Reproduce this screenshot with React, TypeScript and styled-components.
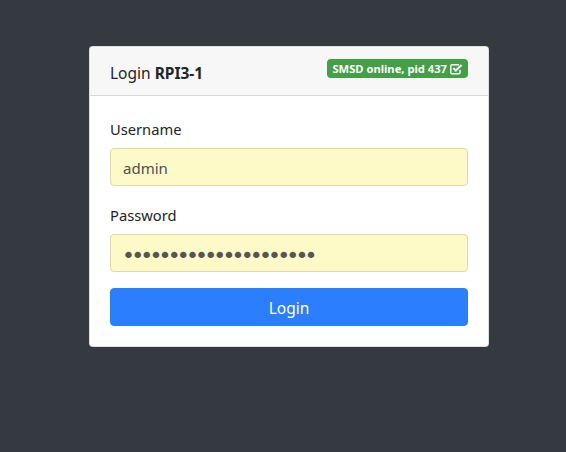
import React, { FC } from "react";
import styled, { createGlobalStyle } from "styled-components";

const GlobalStyle = createGlobalStyle`
  html, body {
    margin: 0;
    min-height: 100%;
    background-color: #343a40;
  }

  body {
    font-family: "Noto Sans", "Open Sans", "Liberation Sans", sans-serif;
    font-size: 16px;
    line-height: 24px;
    color: #212529;
  }
`;

const Page = styled.div`
  display: flex;
  justify-content: flex-start;
  align-items: flex-start;
  height: 452px;
  padding: 46px 0 0 89px;
  box-sizing: border-box;
`;

const Card = styled.div`
  width: 400px;
  box-sizing: border-box;
  border: 1px solid rgba(0, 0, 0, 0.125);
  border-radius: 4px;
  background-color: #fff;
  background-clip: border-box;
`;

const CardHeader = styled.div`
  display: flex;
  justify-content: space-between;
  align-items: flex-start;
  padding: 12px 20px;
  background-color: #f7f7f7;
  border-bottom: 1px solid #d8d8d8;
  border-radius: 3px 3px 0 0;
`;

const Title = styled.span`
  height: 24px;
  font-size: 15.5px;
  line-height: 28px;
`;

const Badge = styled.span`
  display: flex;
  align-items: center;
  gap: 3px;
  height: 19px;
  padding: 0 5px;
  border-radius: 4px;
  background-color: #43a047;
  color: #fff;
  font-size: 11.2px;
  font-weight: 700;
  line-height: 19px;
  white-space: nowrap;
`;

const CardBody = styled.form`
  display: flex;
  flex-direction: column;
  gap: 16px;
  padding: 20px;
`;

const Field = styled.div`
  display: flex;
  flex-direction: column;
  gap: 8px;
`;

const Label = styled.label`
  height: 24px;
  font-size: 14.7px;
  line-height: 26px;
`;

const Input = styled.input`
  display: block;
  height: 38px;
  width: 100%;
  box-sizing: border-box;
  padding: 7px 12px 5px;
  border: 1px solid #ddd9a8;
  border-radius: 4px;
  background-color: #fefac8;
  color: #495057;
  font-family: inherit;
  font-size: 15px;
  outline: none;
`;

const PasswordInput = styled(Input)`
  padding: 8px 12px 3px 11px;
  font-family: "DejaVu Sans", sans-serif;
  font-size: 22px;
  letter-spacing: -3.85px;
  color: #555;
`;

const SubmitButton = styled.button`
  height: 38px;
  width: 100%;
  padding: 2px 0 0;
  border: 1px solid #2b7fff;
  border-radius: 4px;
  background-color: #2b7fff;
  color: #fff;
  font-family: inherit;
  font-size: 15.5px;
`;

const CheckIcon: FC = () => (
  <svg width="13" height="12" viewBox="0 0 13 12" fill="none" stroke="#fff">
    <path d="M10 7v2.5a1.2 1.2 0 0 1-1.2 1.2H2a1.2 1.2 0 0 1-1.2-1.2V3A1.2 1.2 0 0 1 2 1.8h7" strokeWidth="1.4" />
    <path d="M3.4 5.2l2.3 2.3L11.6 2" strokeWidth="2" />
  </svg>
);

const App: FC = () => (
  <>
    <GlobalStyle />
    <Page>
      <Card>
        <CardHeader>
          <Title>
            Login <b>RPI3-1</b>
          </Title>
          <Badge>
            SMSD online, pid 437
            <CheckIcon />
          </Badge>
        </CardHeader>
        <CardBody onSubmit={e => e.preventDefault()}>
          <Field>
            <Label htmlFor="username">Username</Label>
            <Input id="username" type="text" defaultValue="admin" />
          </Field>
          <Field>
            <Label htmlFor="password">Password</Label>
            <PasswordInput id="password" type="password" defaultValue="aaaaaaaaaaaaaaaaaaaaa" />
          </Field>
          <SubmitButton type="submit">Login</SubmitButton>
        </CardBody>
      </Card>
    </Page>
  </>
);

export default App;
